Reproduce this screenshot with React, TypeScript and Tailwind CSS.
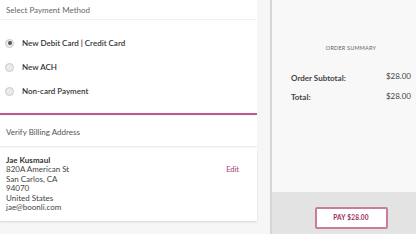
export default function App() {
  const options = [
    { label: "New Debit Card | Credit Card", checked: true },
    { label: "New ACH", checked: false },
    { label: "Non-card Payment", checked: false },
  ];

  return (
    <div className="w-[416px] h-[234px] flex bg-[#f6f6f6] overflow-hidden font-['Lato',sans-serif]">
      {/* Left column */}
      <div className="w-[257px] flex flex-col">
        {/* Payment method */}
        <div className="bg-white border-b-2 border-[#c4578b]">
          <div className="h-[20px] px-[6px] flex items-center border-b border-[#f0f0f0] text-[8px] text-[#666]">
            Select Payment Method
          </div>
          <div className="pt-[11px] pb-[10px]">
            {options.map((o) => (
              <div key={o.label} className="h-[24px] flex items-center pl-[5px] gap-[8px]">
                <span className="w-[9px] h-[9px] rounded-full bg-[#ebebeb] border border-[#c9c9c9] flex items-center justify-center">
                  {o.checked && <span className="w-[4px] h-[4px] rounded-full bg-[#555]" />}
                </span>
                <span className="text-[8px] font-semibold text-[#333]">{o.label}</span>
              </div>
            ))}
          </div>
        </div>

        {/* Billing address */}
        <div className="mt-[1px] bg-white h-[31px] px-[6px] pt-[1px] flex items-center border-b border-[#eeeeee] text-[8px] text-[#555]">
          Verify Billing Address
        </div>
        <div className="mt-[1px] bg-white h-[73px] shadow-[0_1px_2px_rgba(0,0,0,0.12)] px-[6px] pt-[8px] flex justify-between">
          <div className="text-[8px] leading-[9.4px] text-[#444]">
            <div className="font-bold text-[#333]">Jae Kusmaul</div>
            <div>820A American St</div>
            <div>San Carlos, CA</div>
            <div>94070</div>
            <div>United States</div>
            <div>jae@boonli.com</div>
          </div>
          <div className="pt-[8px] pr-[12px] text-[7.5px] text-[#a8336f]">Edit</div>
        </div>
      </div>

      {/* Right column */}
      <div className="ml-[13px] border-l-2 border-[#d6d6d6] flex-1 flex flex-col">
        <div className="h-[192px] bg-[#f8f8f8] pl-[19px] pr-[5px] pt-[44px]">
          <div className="text-center text-[5.5px] tracking-[0.2px] text-[#666] uppercase">Order Summary</div>
          <div className="mt-[18px] flex justify-between items-start text-[8px] text-[#444]">
            <span className="font-bold pt-[2px]">Order Subtotal:</span>
            <span>$28.00</span>
          </div>
          <div className="mt-[6px] flex justify-between items-start text-[8px] text-[#444]">
            <span className="font-bold pt-[1px]">Total:</span>
            <span>$28.00</span>
          </div>
        </div>
        <div className="flex-1 bg-[#e3e3e3] pl-[19px] pr-[5px] pt-[15px] flex items-start justify-center">
          <button className="w-[73px] h-[22px] bg-white border-2 border-[#c97d9e] rounded-[2px] text-[6.5px] font-bold text-[#9b2d5e] tracking-[0.2px]">
            PAY $28.00
          </button>
        </div>
      </div>
    </div>
  );
}
